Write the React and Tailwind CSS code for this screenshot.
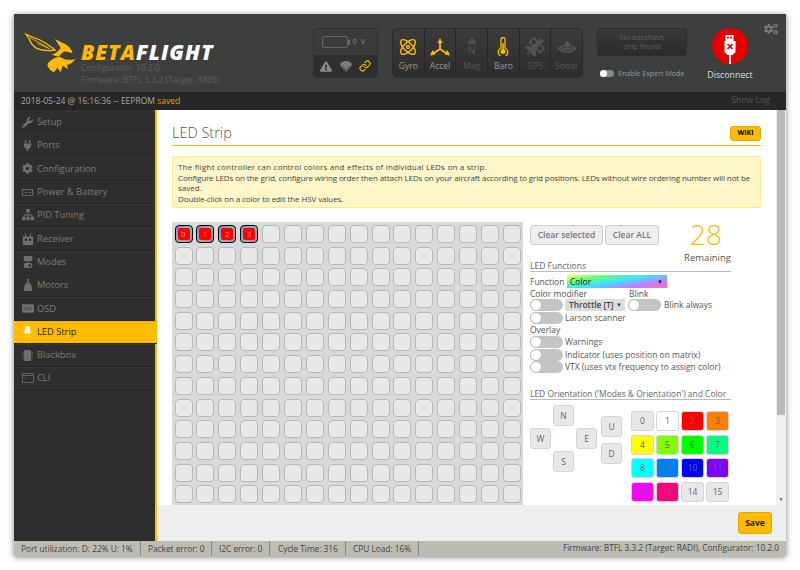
import React from "react";
import { FaWrench, FaPlug, FaCog, FaCogs, FaExclamationTriangle, FaSatellite, FaMicrochip } from "react-icons/fa";
import { Link } from "lucide-react";

const sideItems = ["Setup", "Ports", "Configuration", "Power & Battery", "PID Tuning", "Receiver", "Modes", "Motors", "OSD", "LED Strip", "Blackbox", "CLI"];

const colors = [
  ["0", "bg-[#e8e8e8]"], ["1", "bg-white"], ["2", "bg-[#ff0000] border-[#555]"], ["3", "bg-[#ff7f00]"],
  ["4", "bg-[#ffff00]"], ["5", "bg-[#7fff00]"], ["6", "bg-[#00ff00]"], ["7", "bg-[#00ff7f]"],
  ["8", "bg-[#00ffff]"], ["9", "bg-[#007fff]"], ["10", "bg-[#0000ff]"], ["11", "bg-[#7f00ff]"],
  ["12", "bg-[#ff00ff]"], ["13", "bg-[#ff007f]"], ["14", "bg-[#e8e8e8]"], ["15", "bg-[#e8e8e8]"],
];

function SideIcon({ name }) {
  const cls = "w-[11px] h-[11px] text-[#6f6f6f]";
  if (name === "Setup") return <FaWrench className={cls} />;
  if (name === "Ports") return <FaPlug className={cls} />;
  if (name === "Configuration") return <FaCog className={cls} />;
  if (name === "Blackbox") return <FaMicrochip className={cls} />;
  if (name === "LED Strip")
    return (
      <svg viewBox="0 0 12 14" className="w-[11px] h-[13px]">
        <path d="M3 7V4a3 3 0 0 1 6 0v3h1v2H2V7z" fill="#fff8d0" />
        <path d="M4 9v4M8 9v4" stroke="#ffe27a" strokeWidth="1" />
      </svg>
    );
  if (name === "Power & Battery")
    return (
      <svg viewBox="0 0 14 10" className="w-[12px] h-[9px]" fill="none" stroke="#6f6f6f">
        <rect x="0.5" y="1.5" width="12" height="7" />
        <path d="M3 5h3M8 5h3M13.5 4v2" />
      </svg>
    );
  if (name === "PID Tuning")
    return (
      <svg viewBox="0 0 14 14" className="w-[12px] h-[12px]" fill="#6f6f6f">
        <rect x="5" y="0" width="4" height="4" />
        <rect x="0" y="9" width="4" height="4" />
        <rect x="5" y="9" width="4" height="4" />
        <rect x="10" y="9" width="4" height="4" />
        <path d="M6.5 4h1v2.5H12V9h-1V7.5H7.5V9h-1V7.5H3V9H2V6.500h4.500z" />
      </svg>
    );
  if (name === "Receiver")
    return (
      <svg viewBox="0 0 14 14" className="w-[12px] h-[12px]" fill="#6f6f6f">
        <path d="M3.500 0h1v4h5V0h1v4H13v10H1V4h2.500z" />
        <circle cx="4.500" cy="8" r="1.500" fill="#2e2e2e" />
        <circle cx="9.500" cy="8" r="1.500" fill="#2e2e2e" />
      </svg>
    );
  if (name === "Modes")
    return (
      <svg viewBox="0 0 14 14" className="w-[12px] h-[12px]" fill="#6f6f6f">
        <rect x="2" y="0" width="10" height="6" rx="1" />
        <rect x="2" y="8" width="10" height="6" rx="3" />
        <circle cx="9" cy="11" r="1.500" fill="#2e2e2e" />
      </svg>
    );
  if (name === "Motors")
    return (
      <svg viewBox="0 0 14 14" className="w-[12px] h-[12px]" fill="#6f6f6f">
        <path d="M6 0h2v5h2v2h1l1 7H2l1-7h1V5h2z" />
      </svg>
    );
  if (name === "OSD")
    return (
      <svg viewBox="0 0 14 10" className="w-[12px] h-[9px]" fill="#6f6f6f">
        <rect width="14" height="10" rx="1" />
        <path d="M2 4h10M2 6h10" stroke="#2e2e2e" strokeWidth="0.800" strokeDasharray="1.500 1" />
      </svg>
    );
  return (
    <svg viewBox="0 0 14 12" className="w-[12px] h-[10px]" fill="none" stroke="#6f6f6f">
      <rect x="0.500" y="0.500" width="13" height="11" />
      <path d="M1 3h12M3 6h2" />
    </svg>
  );
}

function Toggle() {
  return (
    <div className="w-[33px] h-[12px] rounded-full bg-[#c4c4c4] relative shrink-0">
      <div className="absolute left-0 top-0 w-[12px] h-[12px] rounded-full bg-white border border-[#bbb]" />
    </div>
  );
}

function DirBtn({ children, className = "" }) {
  return (
    <div className={"w-[21px] h-[21px] rounded-[3px] bg-[#e8e8e8] border border-[#d4d4d4] flex items-center justify-center text-[8.5px] text-[#666] " + className}>
      {children}
    </div>
  );
}

function Sensor({ label, active, children }) {
  return (
    <div className="flex-1 flex flex-col items-center border-r last:border-r-0 border-[#262626] pt-[5px]">
      <div className="h-[25px] flex items-center justify-center">{children}</div>
      <span className={"text-[8.5px] leading-[13px] " + (active ? "text-[#9a9a9a]" : "text-[#565656]")}>{label}</span>
    </div>
  );
}

export default function App() {
  const cells = Array.from({ length: 16 * 13 }, (_, i) => i);

  return (
    <div className="w-[800px] h-[570px] bg-white p-[14px] overflow-hidden font-['Open_Sans',sans-serif]">
      <div className="w-[772px] h-[542px] flex flex-col shadow-[0_1px_6px_rgba(0,0,0,0.5)]">
        {/* Header */}
        <div className="h-[78px] bg-[#3d3f3e] shrink-0 flex relative">
          <div className="w-[299px] flex pl-[6px] pt-[11px]">
            <svg viewBox="0 0 168 150" className="w-[56px] h-[50px] shrink-0" fill="none">
              <path d="M18 28L60 45Q85 58 105 75Q70 80 50 70Q32 58 28 42Z" stroke="#ffbb00" strokeWidth="4" />
              <path d="M30 38L85 68M52 55L90 72" stroke="#ffbb00" strokeWidth="2.500" />
              <path d="M105 42L130 55Q150 62 158 85Q140 78 130 80L115 95Q100 92 95 88Q112 85 122 68Z" fill="#ffbb00" />
              <path d="M82 118Q92 100 118 95L128 100Q140 108 166 102Q155 118 140 120L145 132L128 122L122 142L112 128L102 142Q85 135 82 118Z" fill="#ffbb00" />
            </svg>
            <div className="ml-[5px] pt-[19px]">
              <div className="text-[21px] leading-[16px] font-extrabold italic tracking-[1px] whitespace-nowrap">
                <span className="text-[#ffbb00]">BETA</span>
                <span className="text-white">FLIGHT</span>
              </div>
              <div className="text-[8.5px] leading-[11.500px] text-[#5e5e5e] mt-[2.250px] whitespace-nowrap">
                <div>Configurator: 10.2.0</div>
                <div>Firmware: BTFL 3.3.2 (Target: RADI)</div>
              </div>
            </div>
          </div>

          {/* Battery */}
          <div className="w-[65px] h-[50px] mt-[14px] rounded-[4px] border border-[#2e2e2e] overflow-hidden flex flex-col shrink-0">
            <div className="h-[26px] bg-[#3a3b3a] flex items-center pl-[8px]">
              <div className="w-[26px] h-[12px] border-[1.500px] border-[#666] rounded-[2px]" />
              <div className="w-[1.500px] h-[5px] bg-[#666]" />
              <span className="text-[7.500px] text-[#8a8a8a] ml-[3px] tracking-[1px]">0 V</span>
            </div>
            <div className="flex-1 bg-[#2f2f2f] flex items-center justify-between px-[6px]">
              <FaExclamationTriangle className="w-[12px] h-[11px] text-[#8b8b8b]" />
              <svg viewBox="0 0 12 11" className="w-[12px] h-[11px]" fill="#7b7b7b">
                <path d="M0 4a6 4 0 0 1 12 0L6 11z" />
                <path d="M3 5l3 5 3-5" stroke="#2f2f2f" strokeWidth="0.600" fill="none" />
              </svg>
              <Link className="w-[12px] h-[12px] text-[#ffbb00]" strokeWidth={2.2} />
            </div>
          </div>

          {/* Sensors */}
          <div className="ml-[14px] w-[191px] h-[50px] mt-[14px] rounded-[5px] border border-[#2a2a2a] bg-[linear-gradient(#3a3b3a,#2d2d2d)] flex shrink-0">
            <Sensor label="Gyro" active>
              <svg viewBox="0 0 20 20" className="w-[18px] h-[18px]" fill="none" stroke="#ffbb00" strokeWidth="1.600">
                <ellipse cx="10" cy="10" rx="10.500" ry="4.800" transform="rotate(45 10 10)" />
                <ellipse cx="10" cy="10" rx="10.500" ry="4.800" transform="rotate(-45 10 10)" />
                <circle cx="10" cy="10" r="1.600" />
              </svg>
            </Sensor>
            <Sensor label="Accel" active>
              <svg viewBox="0 0 20 18" className="w-[20px] h-[18px]" fill="#ffbb00" stroke="none">
                <path d="M10 11V4M10 11L4 15M10 11L16 15" stroke="#ffbb00" strokeWidth="1.800" fill="none" />
                <path d="M10 0l2.500 5h-5zM0 17.500l2.500-5.500 3 4.500zM20 17.500l-2.500-5.500-3 4.500z" />
              </svg>
            </Sensor>
            <Sensor label="Mag">
              <div className="flex flex-col items-center text-[#4e4e4e]">
                <div className="w-0 h-0 border-x-[5px] border-x-transparent border-b-[7px] border-b-[#4e4e4e]" />
                <span className="text-[10px] leading-[13px] font-semibold">N</span>
              </div>
            </Sensor>
            <Sensor label="Baro" active>
              <svg viewBox="0 0 12 19" className="w-[12px] h-[19px]" fill="none" stroke="#ffbb00" strokeWidth="1.300">
                <path d="M4 11V2.500a2 2 0 0 1 4 0V11a4.700 4.700 0 1 1-4 0z" />
                <circle cx="6" cy="14.500" r="2.500" fill="#ffbb00" stroke="none" />
                <path d="M6 14V6" strokeWidth="1.500" />
              </svg>
            </Sensor>
            <Sensor label="GPS">
              <FaSatellite className="w-[20px] h-[20px] text-[#515151]" />
            </Sensor>
            <Sensor label="Sonar">
              <svg viewBox="0 0 20 16" className="w-[20px] h-[17px]" fill="none" stroke="#585858" strokeWidth="1.500">
                <circle cx="10" cy="5" r="1.500" fill="#585858" />
                <path d="M6 6c1 3 7 3 8 0M3.500 7c1.500 5 11.500 5 13 0M1 8c2 7 16 7 18 0" />
              </svg>
            </Sensor>
          </div>

          {/* Dataflash + expert */}
          <div className="ml-[14px] w-[90px] pt-[14px] shrink-0">
            <div className="h-[28px] rounded-[3px] border border-[#2e2e2e] bg-[linear-gradient(#3a3a3a,#2a2a2a)] text-[7.500px] leading-[9px] text-[#5f5f5f] flex items-center justify-center text-center">
              No dataflash<br />chip found
            </div>
            <div className="flex items-center mt-[12px] ml-[3px]">
              <div className="w-[14px] h-[7px] rounded-full bg-[#888] relative shrink-0">
                <div className="absolute left-0 top-0 w-[7px] h-[7px] rounded-full bg-white" />
              </div>
              <span className="ml-[4px] text-[7.100px] text-[#999] whitespace-nowrap">Enable Expert Mode</span>
            </div>
          </div>

          {/* Disconnect */}
          <div className="ml-[21px] w-[44px] pt-[14px] flex flex-col items-center shrink-0">
            <div className="w-[36px] h-[36px] rounded-full bg-[#e60000] flex justify-center pt-[7px] overflow-hidden">
              <svg viewBox="0 0 12 29" className="w-[12px] h-[29px] shrink-0">
                <path d="M1.500 0h8v6h-8z" fill="#fff" />
                <path d="M3 1.800h1.800v1.800H3zM6.200 1.800H8v1.800H6.200z" fill="#e60000" />
                <path d="M0.500 6h11v11l-3 3H7v9H5v-9H3.500l-3-3z" fill="#fff" />
                <path d="M3.500 9l5 5M8.500 9l-5 5" stroke="#e60000" strokeWidth="1.700" />
              </svg>
            </div>
            <span className="text-[8.800px] leading-[12px] text-[#ddd] mt-[5px]">Disconnect</span>
          </div>

          <FaCogs className="absolute right-[8px] top-[9px] w-[14px] h-[12px] text-[#777]" />
        </div>

        {/* Log bar */}
        <div className="h-[18px] bg-[#272727] shrink-0 flex items-center justify-between pl-[7px] pr-[16px] text-[8.500px]">
          <span className="text-[#a8a8a8]">
            2018-05-24 @ 16:16:36 -- EEPROM <span className="text-[#d9a520]">saved</span>
          </span>
          <span className="text-[#555] text-[8.700px]">Show Log</span>
        </div>

        <div className="flex-1 flex min-h-0">
          {/* Sidebar */}
          <div className="w-[143px] shrink-0 bg-[#2e2e2e] border-r-[2px] border-[#ffbb00] flex flex-col pt-[1px]">
            {sideItems.map((name) => {
              const on = name === "LED Strip";
              return (
                <div
                  key={name}
                  className={
                    "h-[23.300px] shrink-0 flex items-center border-b border-[#262626] " +
                    (on ? "bg-[#ffbb00] text-[#222] -mr-[2px]" : "text-[#7c7c7c] shadow-[inset_0_1px_0_#363636]")
                  }
                >
                  <div className="w-[23px] flex justify-center pl-[4px]">
                    <SideIcon name={name} />
                  </div>
                  <span className="text-[9.300px]">{name}</span>
                </div>
              );
            })}
          </div>

          {/* Main */}
          <div className="flex-1 flex flex-col min-w-0">
            <div className="flex-1 flex min-h-0">
              <div className="flex-1 bg-white pl-[15px] pr-[15px] overflow-hidden">
                <div className="h-[36px] border-b border-[#ffbb00] flex items-end justify-between pb-[2px]">
                  <span className="text-[14.500px] leading-[20px] font-light text-[#555]">LED Strip</span>
                  <div className="w-[31px] h-[15px] mb-[2px] rounded-[3px] bg-[#ffbb00] border border-[#e0a800] flex items-center justify-center text-[7px] font-bold text-black">
                    WIKI
                  </div>
                </div>

                <div className="mt-[10px] h-[52px] bg-[#fff6c9] border border-[#ffe98a] rounded-[2px] px-[5px] pt-[5px] text-[8px] leading-[10.700px] text-[#444] whitespace-nowrap">
                  <div className="tracking-[0.2px]">The flight controller can control colors and effects of individual LEDs on a strip.</div>
                  <div className="tracking-[-0.11px]">Configure LEDs on the grid, configure wiring order then attach LEDs on your aircraft according to grid positions. LEDs without wire ordering number will not be</div>
                  <div>saved.</div>
                  <div className="tracking-[-0.1px]">Double-click on a color to edit the HSV values.</div>
                </div>

                <div className="mt-[14px] flex">
                  {/* LED grid */}
                  <div className="w-[351px] h-[283px] bg-[#d9d9d9] overflow-hidden pl-[2.500px] pt-[3px] shrink-0">
                    <div className="grid grid-cols-[repeat(16,18px)] gap-x-[3.900px] gap-y-[3.700px]">
                      {cells.map((i) =>
                        i < 4 ? (
                          <div key={i} className="w-[18px] h-[18px] rounded-[4px] border border-black bg-[linear-gradient(135deg,#c060e0,#70d0a0,#e060d0)] p-[2px]">
                            <div className="w-full h-full rounded-[2px] bg-[#ff0000] text-[7.500px] leading-[12px] text-center text-[#c8a0a0]">{i}</div>
                          </div>
                        ) : (
                          <div key={i} className="w-[18px] h-[18px] rounded-[4px] border border-[#b8b8b8] bg-[#e8e8e8]" />
                        )
                      )}
                    </div>
                  </div>

                  {/* Right column */}
                  <div className="ml-[7px] flex-1 min-w-0 text-[8.500px] leading-[12px] text-[#555]">
                    <div className="w-[201px]">
                      <div className="flex h-[38px]">
                        <div className="flex gap-[2px] pt-[3px]">
                          <div className="w-[73px] h-[20px] rounded-[3px] bg-[#eee] border border-[#ccc] flex items-center justify-center text-[8.500px] font-semibold text-[#777]">Clear selected</div>
                          <div className="w-[54px] h-[20px] rounded-[3px] bg-[#eee] border border-[#ccc] flex items-center justify-center text-[8.500px] font-semibold text-[#777]">Clear ALL</div>
                        </div>
                        <div className="flex-1 flex flex-col items-end">
                          <span className="w-[50px] text-center text-[28px] leading-[24px] font-light text-[#ffbb00]">28</span>
                          <span className="text-[9.500px] leading-[11px] mt-[5.500px] text-[#555]">Remaining</span>
                        </div>
                      </div>
                      <div className="border-b border-[#bbb] text-[8.500px] leading-[11px] text-[#666]">LED Functions</div>
                      <div className="flex items-center mt-[3px] h-[13px]">
                        <span className="w-[37px]">Function</span>
                        <div className="w-[100px] h-[13px] bg-[linear-gradient(170deg,#ffff60,#60ff80,#40e0ff,#c080ff,#ff70b0)] text-[8.500px] text-[#222] pl-[3px] pr-[4px] flex items-center justify-between">
                          Color
                          <span className="text-[6px]">▼</span>
                        </div>
                      </div>
                      <div className="flex h-[11px]">
                        <span className="w-[99px]">Color modifier</span>
                        <span>Blink</span>
                      </div>
                      <div className="flex items-center h-[12px]">
                        <Toggle />
                        <div className="ml-[2px] w-[60px] h-[12px] bg-[#ddd] font-semibold text-[#444] flex items-center justify-between pl-[4px] pr-[3px] text-[8.300px]">
                          Throttle [T]
                          <span className="text-[6px]">▼</span>
                        </div>
                        <div className="ml-[3px]"><Toggle /></div>
                        <span className="ml-[3px]">Blink always</span>
                      </div>
                      <div className="flex items-center gap-[2px] h-[13px]">
                        <Toggle />
                        <span>Larson scanner</span>
                      </div>
                      <div className="h-[12px]">Overlay</div>
                      <div className="flex items-center gap-[2px] h-[12.500px]"><Toggle /><span>Warnings</span></div>
                      <div className="flex items-center gap-[2px] h-[12.500px]"><Toggle /><span>Indicator (uses position on matrix)</span></div>
                      <div className="flex items-center gap-[2px] h-[12.500px]"><Toggle /><span className="whitespace-nowrap">VTX (uses vtx frequency to assign color)</span></div>

                      <div className="mt-[14.500px] border-b border-[#bbb] leading-[11px] text-[8.450px] text-[#666] whitespace-nowrap">LED Orientation ('Modes &amp; Orientation') and Color</div>

                      <div className="flex mt-[5px]">
                        <div className="grid grid-cols-[23px_22px_22px] grid-rows-[23px_23px_21px] w-[67px] shrink-0">
                          <div />
                          <DirBtn>N</DirBtn>
                          <div />
                          <DirBtn>W</DirBtn>
                          <div />
                          <DirBtn className="ml-[1px]">E</DirBtn>
                          <div />
                          <DirBtn>S</DirBtn>
                        </div>
                        <div className="ml-[4px] pt-[11px] flex flex-col gap-[6px] shrink-0">
                          <DirBtn>U</DirBtn>
                          <DirBtn>D</DirBtn>
                        </div>
                        <div className="ml-[9px] pt-[6px] grid grid-cols-[repeat(4,23px)] gap-x-[2px] gap-y-[3.500px] h-[95px]">
                          {colors.map(([n, bg]) => (
                            <div key={n} className={"h-[20px] rounded-[3px] border border-[#d4d4d4] flex items-center justify-center text-[8.500px] text-[#666] " + bg}>
                              {n}
                            </div>
                          ))}
                        </div>
                      </div>
                    </div>
                  </div>
                </div>
              </div>

              {/* Scrollbar */}
              <div className="w-[10px] shrink-0 bg-[#f0f0f0] flex flex-col">
                <div className="h-[305px] bg-[#b9b9b9] mx-[1px]" />
                <div className="flex-1" />
                <div className="h-[10px] flex items-center justify-center text-[5px] text-[#555]">▼</div>
              </div>
            </div>

            {/* Save bar */}
            <div className="h-[36px] bg-[#eeeeee] shrink-0 flex items-center justify-end pr-[14px]">
              <div className="w-[34px] h-[22px] rounded-[3px] bg-[#ffbb00] border border-[#e6a800] flex items-center justify-center text-[8.500px] font-bold text-[#222]">
                Save
              </div>
            </div>
          </div>
        </div>

        {/* Status bar */}
        <div className="h-[15px] bg-[#bdbcb3] shrink-0 flex items-center text-[8.300px] text-[#444]">
          <span className="px-[7px] border-r border-[#888] leading-[15px] w-[127px] whitespace-nowrap">Port utilization: D: 22% U: 1%</span>
          <span className="px-[7px] border-r border-[#888] leading-[15px] w-[71px] whitespace-nowrap">Packet error: 0</span>
          <span className="px-[7px] border-r border-[#888] leading-[15px] w-[58px] whitespace-nowrap">I2C error: 0</span>
          <span className="px-[8px] border-r border-[#888] leading-[15px] w-[76px] whitespace-nowrap">Cycle Time: 316</span>
          <span className="px-[7px] border-r border-[#888] leading-[15px] w-[73px] whitespace-nowrap">CPU Load: 16%</span>
          <span className="ml-auto pr-[7px] whitespace-nowrap">Firmware: BTFL 3.3.2 (Target: RADI), Configurator: 10.2.0</span>
        </div>
      </div>
    </div>
  );
}
